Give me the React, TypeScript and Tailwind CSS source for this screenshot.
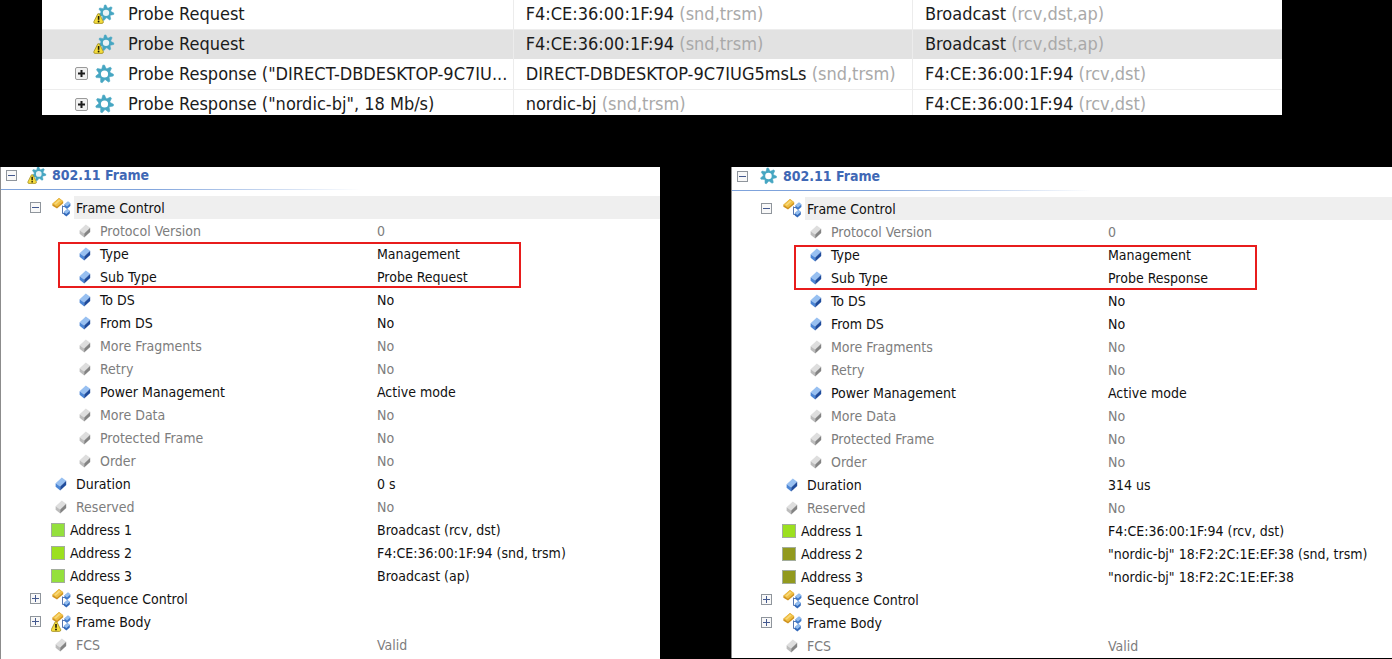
import React from "react";

type IconKind = "field" | "muted" | "group" | "groupWarn" | "green" | "lime" | "olive";

interface TreeRow {
  label: string;
  value?: string;
  icon: IconKind;
  depth: 1 | 2;
  expander?: "plus" | "minus";
}

interface Packet {
  name: string;
  source: string;
  sourceRole: string;
  target: string;
  targetRole: string;
  warn?: boolean;
  selected?: boolean;
}

const packets: Packet[] = [
  { name: "Probe Request", source: "F4:CE:36:00:1F:94", sourceRole: "(snd,trsm)", target: "Broadcast", targetRole: "(rcv,dst,ap)", warn: true },
  { name: "Probe Request", source: "F4:CE:36:00:1F:94", sourceRole: "(snd,trsm)", target: "Broadcast", targetRole: "(rcv,dst,ap)", warn: true, selected: true },
  { name: 'Probe Response ("DIRECT-DBDESKTOP-9C7IU...', source: "DIRECT-DBDESKTOP-9C7IUG5msLs", sourceRole: "(snd,trsm)", target: "F4:CE:36:00:1F:94", targetRole: "(rcv,dst)" },
  { name: 'Probe Response ("nordic-bj", 18 Mb/s)', source: "nordic-bj", sourceRole: "(snd,trsm)", target: "F4:CE:36:00:1F:94", targetRole: "(rcv,dst)" },
];

function controlFlags(): TreeRow[] {
  return [
    { label: "To DS", value: "No", icon: "field", depth: 2 },
    { label: "From DS", value: "No", icon: "field", depth: 2 },
    { label: "More Fragments", value: "No", icon: "muted", depth: 2 },
    { label: "Retry", value: "No", icon: "muted", depth: 2 },
    { label: "Power Management", value: "Active mode", icon: "field", depth: 2 },
    { label: "More Data", value: "No", icon: "muted", depth: 2 },
    { label: "Protected Frame", value: "No", icon: "muted", depth: 2 },
    { label: "Order", value: "No", icon: "muted", depth: 2 },
  ];
}

const requestRows: TreeRow[] = [
  ...controlFlags(),
  { label: "Duration", value: "0 s", icon: "field", depth: 1 },
  { label: "Reserved", value: "No", icon: "muted", depth: 1 },
  { label: "Address 1", value: "Broadcast (rcv, dst)", icon: "green", depth: 1 },
  { label: "Address 2", value: "F4:CE:36:00:1F:94 (snd, trsm)", icon: "lime", depth: 1 },
  { label: "Address 3", value: "Broadcast (ap)", icon: "green", depth: 1 },
  { label: "Sequence Control", icon: "group", depth: 1, expander: "plus" },
  { label: "Frame Body", icon: "groupWarn", depth: 1, expander: "plus" },
  { label: "FCS", value: "Valid", icon: "muted", depth: 1 },
];

const responseRows: TreeRow[] = [
  ...controlFlags(),
  { label: "Duration", value: "314 us", icon: "field", depth: 1 },
  { label: "Reserved", value: "No", icon: "muted", depth: 1 },
  { label: "Address 1", value: "F4:CE:36:00:1F:94 (rcv, dst)", icon: "lime", depth: 1 },
  { label: "Address 2", value: '"nordic-bj" 18:F2:2C:1E:EF:38 (snd, trsm)', icon: "olive", depth: 1 },
  { label: "Address 3", value: '"nordic-bj" 18:F2:2C:1E:EF:38', icon: "olive", depth: 1 },
  { label: "Sequence Control", icon: "group", depth: 1, expander: "plus" },
  { label: "Frame Body", icon: "group", depth: 1, expander: "plus" },
  { label: "FCS", value: "Valid", icon: "muted", depth: 1 },
];

const GEAR_TEETH = 7;
const gearPoints = Array.from({ length: GEAR_TEETH * 4 }, (_, i) => {
  const tooth = Math.floor(i / 4);
  const corner = i % 4;
  const radius = corner === 1 || corner === 2 ? 9 : 5.8;
  const spread = [-0.38, -0.09, 0.09, 0.38][corner];
  const angle = (tooth / GEAR_TEETH) * Math.PI * 2 - Math.PI / 2 - 0.1 + spread;
  return `${(10 + radius * Math.cos(angle)).toFixed(2)},${(10 + radius * Math.sin(angle)).toFixed(2)}`;
}).join(" ");

function Warning() {
  return (
    <g>
      <path d="M4.8 9.8 L6.4 9.8 L10.4 17.8 Q10.4 19.4 9 19.4 L2 19.4 Q.6 19.4 .8 17.8 Z" fill="#f4dc3c" stroke="#a08a20" strokeWidth=".8" />
      <path d="M5.6 12 V15.8" stroke="#1d1a05" strokeWidth="1.6" />
      <circle cx="5.6" cy="17.5" r=".95" fill="#1d1a05" />
    </g>
  );
}

function Gear({ warn, small }: { warn?: boolean; small?: boolean }) {
  return (
    <svg viewBox="0 0 22 20" className={small ? "h-[18px] w-5 shrink-0" : "h-5 w-[22px] shrink-0"} aria-hidden="true">
      <g transform={warn ? "translate(4.2 0) scale(.88)" : "translate(1.5 0)"}>
        <polygon points={gearPoints} fill="#46a6c2" stroke="#46a6c2" strokeWidth=".6" strokeLinejoin="round" />
        <circle cx="10" cy="10" r="3.6" fill={warn ? "#e9f3f6" : "#ffffff"} />
      </g>
      {warn && <Warning />}
    </svg>
  );
}

function GroupIcon({ warn }: { warn?: boolean }) {
  return (
    <svg viewBox="0 0 20 20" className="h-5 w-5 shrink-0" aria-hidden="true">
      <path d="M11.5 7.5 V15.5 H14 M11.5 8.5 H15" fill="none" stroke="#5577b0" strokeWidth="1" />
      <path d="M1.4 5.8 L8 0 L12.2 3.2 V5.2 L6 10.6 L1.4 7.8 Z" fill="#cf921f" />
      <path d="M1.4 5.8 L8 0 L12.2 3.2 L6 8.8 Z" fill="#efbf45" />
      <path d="M3.2 5.7 L8 1.4 L9.6 2.6 L4.8 6.8 Z" fill="#f8d878" />
      <path d="M13.4 6.6 L17 3.4 L19.4 5.4 V8 L16 11 L13.4 9 Z" fill="#3f78c8" />
      <path d="M13.4 6.6 L17 3.4 L19.4 5.4 L16 8.4 Z" fill="#93bef0" />
      <path d="M12.8 14.2 L16.4 11 L18.8 13 V15.6 L15.4 18.6 L12.8 16.6 Z" fill="#336abb" />
      <path d="M12.8 14.2 L16.4 11 L18.8 13 L15.4 16 Z" fill="#93bef0" />
      {warn && (
        <g transform="translate(-.6 0)">
          <Warning />
        </g>
      )}
    </svg>
  );
}

function FieldIcon({ muted }: { muted?: boolean }) {
  const top = muted ? "#dedede" : "#98c0f1";
  const left = muted ? "#bcbcbc" : "#4b86d6";
  const right = muted ? "#838383" : "#1f4c9c";
  return (
    <svg viewBox="0 0 12 14" className="h-3.5 w-3 shrink-0" aria-hidden="true">
      <path d="M.6 6.2 L6.8 .4 L11.2 3.8 L5.2 9.4 Z" fill={top} />
      <path d="M.6 6.2 L5.2 9.4 V13.6 L.6 9.8 Z" fill={left} />
      <path d="M5.2 9.4 L11.2 3.8 V8 L5.2 13.6 Z" fill={right} />
    </svg>
  );
}

function Expander({ kind, label, bold }: { kind: "plus" | "minus"; label: string; bold?: boolean }) {
  return (
    <button
      type="button"
      aria-label={`${kind === "plus" ? "Expand" : "Collapse"} ${label}`}
      className={
        bold
          ? "flex size-[13px] shrink-0 items-center justify-center rounded-xs border border-[#9a9a9a] bg-[#f1f1f1]"
          : "flex size-[11px] shrink-0 items-center justify-center border border-[#8f959c] bg-[#f8f8f8]"
      }
    >
      <svg viewBox="0 0 9 9" className="size-[9px]" aria-hidden="true">
        <path
          d={kind === "plus" ? "M1 4.5 H8 M4.5 1 V8" : "M1 4.5 H8"}
          stroke={bold ? "#1c1c1c" : "#44598f"}
          strokeWidth={bold ? 2 : 1}
        />
      </svg>
    </button>
  );
}

const swatches: Partial<Record<IconKind, string>> = {
  green: "bg-[#94e03c]",
  lime: "bg-[#9ce01e]",
  olive: "bg-[#929a1e]",
};

function RowIcon({ icon }: { icon: IconKind }) {
  if (icon === "field" || icon === "muted") return <FieldIcon muted={icon === "muted"} />;
  if (icon === "group" || icon === "groupWarn") return <GroupIcon warn={icon === "groupWarn"} />;
  return <span className={`size-3.5 shrink-0 border border-[#a3ad9c] ${swatches[icon]}`} />;
}

function Row({ row }: { row: TreeRow }) {
  const swatch = row.icon in swatches;
  const muted = row.icon === "muted";
  return (
    <li className={`flex h-[23px] items-center ${muted ? "text-[#7d7d7d]" : "text-[#111111]"}`}>
      <div className="flex w-[376px] shrink-0 items-center">
        <span className="flex w-[50px] shrink-0 items-center pl-[29px]">
          {row.expander && <Expander kind={row.expander} label={row.label} />}
        </span>
        {row.depth === 2 && <span className="w-6 shrink-0" />}
        <span className={swatch ? "flex w-[19px] shrink-0" : "flex w-[25px] shrink-0 items-center justify-start"}>
          {(row.icon === "field" || row.icon === "muted") && <span className="w-1" />}
          <RowIcon icon={row.icon} />
        </span>
        <span>{row.label}</span>
      </div>
      {row.value && <span className="whitespace-nowrap">{row.value}</span>}
    </li>
  );
}

interface PanelProps {
  warn?: boolean;
  subType: string;
  rows: TreeRow[];
  className: string;
  frameClass: string;
}

function FramePanel({ warn, subType, rows, className, frameClass }: PanelProps) {
  return (
    <section className={`min-w-0 overflow-hidden border-l border-[#8c8c8c] bg-white ${className}`}>
      <header className="flex h-4 items-center pl-[5px]">
        <Expander kind="minus" label="802.11 Frame" />
        <span className="w-[10px]" />
        <Gear warn={warn} small />
        <h2 className="ml-[5px] text-[14px] font-bold text-[#3f68b5]">802.11 Frame</h2>
      </header>
      <div className="mt-[6px] h-px w-[360px] bg-linear-to-r from-[#7fa3dc] from-40% to-transparent" />
      <div className="mt-[6px] flex h-[23px] items-center pl-[29px]">
        <Expander kind="minus" label="Frame Control" />
        <span className="w-[10px] shrink-0" />
        <GroupIcon />
        <span className="ml-[3px] flex h-full flex-1 items-center bg-[#efefef] pl-[2px] text-[#111111]">
          Frame Control
        </span>
      </div>
      <ul>
        <Row row={{ label: "Protocol Version", value: "0", icon: "muted", depth: 2 }} />
        <li className="relative">
          <ul>
            <Row row={{ label: "Type", value: "Management", icon: "field", depth: 2 }} />
            <Row row={{ label: "Sub Type", value: subType, icon: "field", depth: 2 }} />
          </ul>
          <div className={`pointer-events-none absolute w-[463px] border-2 border-[#e81c1c] ${frameClass}`} />
        </li>
        {rows.map((row) => (
          <Row key={row.label} row={row} />
        ))}
      </ul>
    </section>
  );
}

export default function App() {
  return (
    <main className="min-h-screen overflow-hidden bg-black font-['DejaVu_Sans_Condensed','DejaVu_Sans',sans-serif] text-[14px] leading-5">
      <div className="mr-[110px] ml-[42px] h-[115px] overflow-hidden bg-white">
        <table className="-mt-px w-full table-fixed border-collapse text-[18px] text-[#1b1b1b]">
          <colgroup>
            <col className="w-[38%]" />
            <col className="w-[32.2%]" />
            <col className="w-[29.8%]" />
          </colgroup>
          <tbody>
            {packets.map((p, i) => (
              <tr
                key={i}
                className={`h-[30px] ${p.selected ? "bg-[#e2e2e2]" : "border-b border-[#ededed]"}`}
              >
                <td className="border-r border-[#ececec] p-0">
                  <div className="flex items-center whitespace-nowrap pl-[33px]">
                    <span className="w-[18px] shrink-0">
                      {!p.warn && <Expander kind="plus" label={p.name} bold />}
                    </span>
                    <Gear warn={p.warn} />
                    <span className="ml-[13px]">{p.name}</span>
                  </div>
                </td>
                <td className="border-r border-[#ececec] p-0 pl-3 whitespace-nowrap">
                  {p.source} <span className="text-[#a9a9a9]">{p.sourceRole}</span>
                </td>
                <td className="p-0 pl-3 whitespace-nowrap">
                  {p.target} <span className="text-[#a9a9a9]">{p.targetRole}</span>
                </td>
              </tr>
            ))}
          </tbody>
        </table>
      </div>
      <div className="mt-[52px] grid grid-cols-[660fr_661fr] items-start gap-[71px]">
        <FramePanel
          warn
          subType="Probe Request"
          rows={requestRows}
          className="h-[492px]"
          frameClass="top-0 left-[57px] h-[46px]"
        />
        <FramePanel
          subType="Probe Response"
          rows={responseRows}
          className="h-[491px] pt-px"
          frameClass="top-0.5 left-[62px] h-[45px]"
        />
      </div>
    </main>
  );
}
